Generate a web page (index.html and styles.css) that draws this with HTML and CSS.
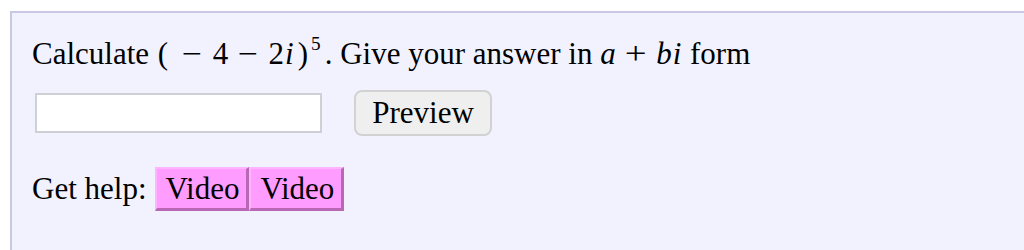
FILE: index.html
```html
<!DOCTYPE html>
<html>
<head>
<meta charset="utf-8">
<link rel="stylesheet" href="styles.css">
</head>
<body>
<div class="problem">
  <div class="question">Calculate <span class="math"><span class="paren">(</span><span class="op op-first">−</span>4<span class="op">−</span><span class="mn">2</span><span class="mi mi-i">i</span><span class="paren paren-close">)</span><sup class="sup">5</sup></span>. Give your answer in <span class="math"><span class="mi">a</span><span class="op op-plus">+</span><span class="mi">b</span><span class="mi">i</span></span> form</div>
  <div class="answer-row">
    <input class="answer" type="text">
    <button class="preview" type="button">Preview</button>
  </div>
  <div class="help-row">
    <span class="help-label">Get help:</span>
    <span class="help-links"><a class="video">Video</a><a class="video">Video</a></span>
  </div>
</div>
</body>
</html>
```

FILE: styles.css
```css
html, body {
  margin: 0;
  padding: 0;
  background: #ffffff;
  overflow: hidden;
}
body {
  font-family: "Liberation Serif", "Times New Roman", serif;
  font-size: 31px;
  color: #000;
}
.problem {
  margin: 11px 0 0 10px;
  border-top: 2px solid #c8c8e4;
  border-left: 2px solid #c8c8e4;
  background: #f2f2ff;
  padding: 23px 20px 0 20px;
  height: 300px;
}
.question {
  line-height: 36px;
  white-space: nowrap;
}
.math {
  font-family: "Liberation Serif", "Times New Roman", serif;
}
.mi {
  font-style: italic;
  margin-right: 1px;
}
.mn {
  margin-right: 1px;
}
.mi-i {
  margin-right: 2px;
}
.op {
  display: inline-block;
  transform: scaleX(1.15);
  margin: 0 12px 0 11px;
}
.op-first {
  margin-left: 14px;
}
.op-plus {
  transform: scaleX(1.25);
  margin: 0 12px 0 10px;
}
.paren {
  margin: 0 1px;
}
.paren-close {
  margin-left: 2px;
}
.sup {
  font-size: 0.62em;
  vertical-align: 0;
  position: relative;
  top: -0.75em;
  line-height: 0;
  margin-left: 2px;
  margin-right: 4px;
}
.answer-row {
  display: flex;
  align-items: center;
  margin-top: 18px;
  height: 46px;
}
.answer {
  box-sizing: border-box;
  width: 287px;
  height: 40px;
  margin: 0 0 0 3px;
  border: 2px solid #cfcfd6;
  background: #fff;
  padding: 0 4px;
  font: inherit;
}
.preview {
  box-sizing: border-box;
  margin-left: 32px;
  width: 138px;
  height: 46px;
  font: inherit;
  font-size: 31px;
  background: #efefef;
  border: 2px solid #d2d2d2;
  border-radius: 8px;
  padding: 0;
  color: #000;
}
.help-row {
  display: flex;
  align-items: center;
  margin-top: 31px;
  height: 44px;
}
.help-label {
  margin-right: 8px;
}
.help-links {
  display: flex;
}
.video {
  box-sizing: border-box;
  display: flex;
  align-items: center;
  height: 44px;
  padding: 0 7px 0 9px;
  background: #ff9cff;
  border-top: 2px solid #ffb4ff;
  border-left: 2px solid #ffb4ff;
  border-right: 3px solid #b868b4;
  border-bottom: 3px solid #b868b4;
  color: #000;
  line-height: 1;
}
```
